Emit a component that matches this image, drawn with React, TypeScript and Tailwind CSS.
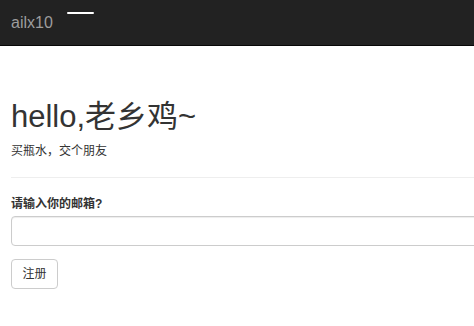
export default function App() {
  return (
    <div
      className="w-[474px] h-[326px] overflow-hidden bg-white text-[#333]"
      style={{ fontFamily: '"Liberation Sans", Arial, "Noto Sans CJK SC", sans-serif' }}
    >
      {/* Navbar */}
      <nav className="h-[46px] bg-[#222] border-b border-[#080808] flex items-center pl-[11px] relative">
        <a href="#" className="text-[16px] text-[#9d9d9d] leading-none">
          ailx10
        </a>
        <span className="absolute left-[67px] top-[12px] w-[27px] h-[2px] bg-white rounded-[1px]" />
      </nav>

      {/* Content */}
      <div className="w-[600px] pl-[11px] pt-[53px]">
        <div className="pb-[17px] border-b border-[#eee]">
          <h1 className="text-[31px] leading-[36px] font-normal">hello,老乡鸡~</h1>
          <p className="text-[12px] leading-[18px] mt-[7px]">买瓶水，交个朋友</p>
        </div>

        <form className="mt-[18px]">
          <label className="block text-[12px] leading-[16px] font-bold mb-[4px]">请输入你的邮箱?</label>
          <input
            type="text"
            className="block w-full h-[30px] border border-[#ccc] rounded-[4px] px-[10px] text-[12px] shadow-[inset_0_1px_1px_rgba(0,0,0,0.075)] outline-none"
          />
          <button
            type="button"
            className="mt-[13px] h-[30px] w-[47px] border border-[#ccc] rounded-[4px] bg-white text-[12px] text-[#333]"
          >
            注册
          </button>
        </form>
      </div>
    </div>
  );
}
